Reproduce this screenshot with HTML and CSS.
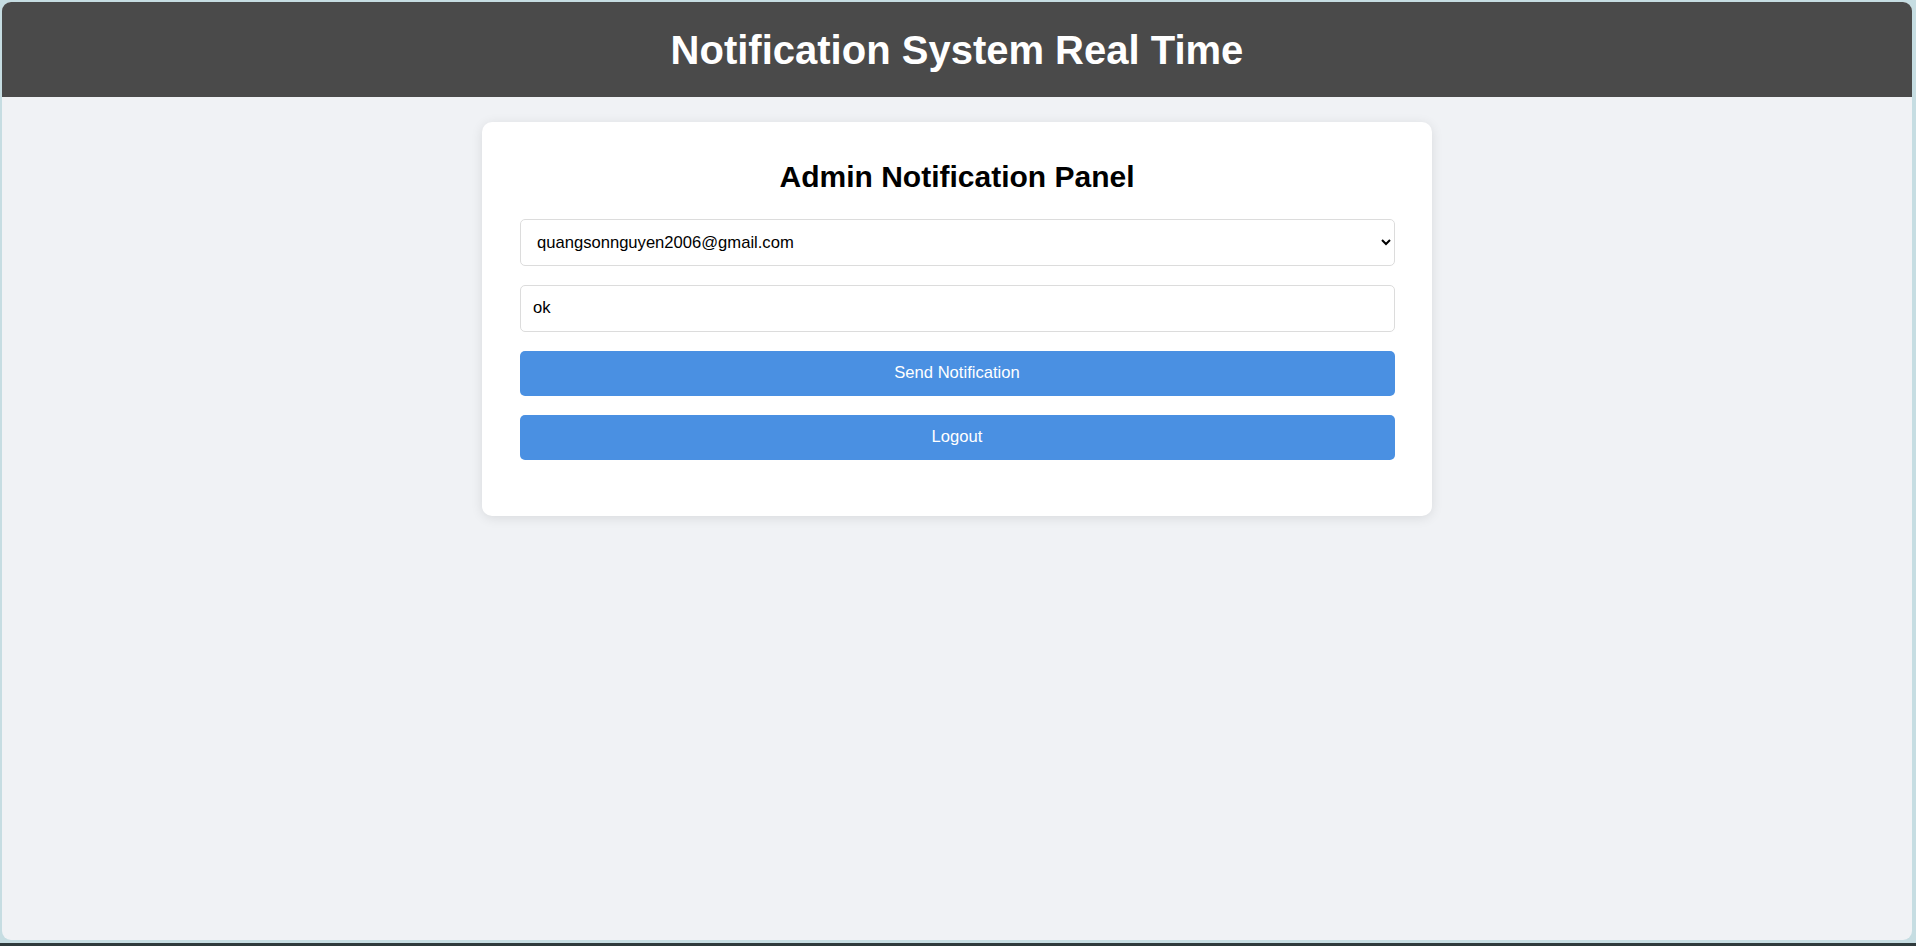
FILE: index.html
```html
<!DOCTYPE html>
<html lang="en">
<head>
<meta charset="utf-8">
<title>Notification System Real Time</title>
<link rel="stylesheet" href="styles.css">
</head>
<body>
<div class="window">
  <header class="topbar">
    <h1 class="title">Notification System Real Time</h1>
  </header>
  <main class="content">
    <section class="card">
      <h2 class="card-title">Admin Notification Panel</h2>
      <div class="form">
        <select class="field select">
          <option>quangsonnguyen2006@gmail.com</option>
        </select>
        <input class="field input" type="text" value="ok">
        <button class="btn">Send Notification</button>
        <button class="btn btn-last">Logout</button>
      </div>
    </section>
  </main>
</div>
</body>
</html>
```

FILE: styles.css
```css
html, body {
  margin: 0;
  height: 946px;
}
body {
  box-sizing: border-box;
  padding: 2px 4px 3px 2px;
  background: #c6dde2;
  border-bottom: 3px solid #2f3a3c;
  font-family: "Liberation Sans", Arial, sans-serif;
  overflow: hidden;
}
.window {
  height: 938px;
  border-radius: 9px;
  overflow: hidden;
  background: #f0f2f5;
  display: flex;
  flex-direction: column;
}
.topbar {
  height: 95px;
  flex: none;
  background: #4a4a4a;
  display: flex;
  align-items: center;
  justify-content: center;
}
.title {
  margin: 0;
  color: #ffffff;
  font-size: 40px;
  font-weight: bold;
  line-height: 46px;
}
.content {
  flex: 1;
  display: flex;
  justify-content: center;
  align-items: flex-start;
  padding-top: 25px;
}
.card {
  width: 950px;
  box-sizing: border-box;
  padding: 37.5px 37.5px 37px;
  background: #ffffff;
  border-radius: 10px;
  box-shadow: 0 2px 12px rgba(0, 0, 0, 0.1);
}
.card-title {
  margin: 0 0 25px;
  text-align: center;
  font-size: 30px;
  font-weight: bold;
  color: #000;
}
.form {
  display: flex;
  flex-direction: column;
  gap: 19px;
}
.field {
  box-sizing: border-box;
  width: 100%;
  border: 1px solid #dcdcdc;
  border-radius: 5px;
  background: #ffffff;
  color: #000;
  font-family: "Liberation Sans", Arial, sans-serif;
  font-size: 16.6px;
  padding: 0 12.5px;
}
.select {
  height: 47px;
}
.input {
  height: 47px;
}
.btn {
  height: 45px;
  border: none;
  border-radius: 5px;
  background: #4a90e2;
  color: #ffffff;
  font-family: "Liberation Sans", Arial, sans-serif;
  font-size: 16.6px;
  cursor: pointer;
}
.btn-last {
  margin-bottom: 19px;
}
```
